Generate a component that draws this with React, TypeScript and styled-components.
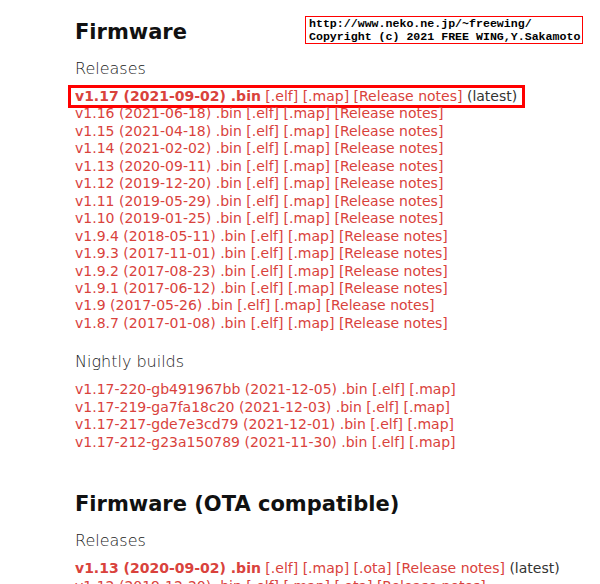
import React from 'react';
import styled, { createGlobalStyle } from 'styled-components';

const GlobalStyle = createGlobalStyle`
  html, body {
    margin: 0;
    padding: 0;
    background: #ffffff;
  }
  body {
    font-family: "DejaVu Sans", "Noto Sans", sans-serif;
    color: #222222;
  }
`;

const Page = styled.div`
  position: relative;
  width: 600px;
  height: 584px;
  overflow: hidden;
  padding: 19px 0 0 75px;
  box-sizing: border-box;
`;

const Stamp = styled.div`
  position: absolute;
  top: 16px;
  left: 305px;
  width: 278px;
  box-sizing: border-box;
  border: 1px solid #ff0000;
  background: #ffffff;
  padding: 0 0 0 3px;
  font-family: "Liberation Mono", monospace;
  font-weight: bold;
  font-size: 11.6px;
  line-height: 13px;
  color: #000000;
  white-space: pre;
`;

const Title = styled.h2<{ $gap?: number }>`
  margin: ${(p) => p.$gap ?? 0}px 0 0;
  font-family: "DejaVu Sans", sans-serif;
  font-weight: bold;
  font-size: 21px;
  line-height: 26px;
  color: #111111;
`;

const SubTitle = styled.h3<{ $gap?: number }>`
  margin: ${(p) => p.$gap ?? 13}px 0 8px;
  font-family: "DejaVu Sans", sans-serif;
  font-weight: 200;
  font-size: 16px;
  line-height: 22px;
  color: #1a1a1a;
`;

const List = styled.div`
  display: flex;
  flex-direction: column;
`;

const Row = styled.div<{ $marked?: boolean }>`
  position: relative;
  align-self: flex-start;
  font-size: 14px;
  line-height: 17.45px;
  white-space: nowrap;
  color: #333333;

  ${(p) =>
    p.$marked &&
    `
    &::after {
      content: "";
      position: absolute;
      top: -3px;
      bottom: -3px;
      left: -7px;
      right: -8px;
      border: 3px solid #ff0000;
      pointer-events: none;
    }
  `}
`;

const Link = styled.a<{ $bold?: boolean }>`
  color: #d9423c;
  text-decoration: none;
  font-weight: ${(p) => (p.$bold ? 'bold' : 'normal')};
`;

type Release = { ver: string; date: string };

const releases: Release[] = [
  { ver: 'v1.17', date: '2021-09-02' },
  { ver: 'v1.16', date: '2021-06-18' },
  { ver: 'v1.15', date: '2021-04-18' },
  { ver: 'v1.14', date: '2021-02-02' },
  { ver: 'v1.13', date: '2020-09-11' },
  { ver: 'v1.12', date: '2019-12-20' },
  { ver: 'v1.11', date: '2019-05-29' },
  { ver: 'v1.10', date: '2019-01-25' },
  { ver: 'v1.9.4', date: '2018-05-11' },
  { ver: 'v1.9.3', date: '2017-11-01' },
  { ver: 'v1.9.2', date: '2017-08-23' },
  { ver: 'v1.9.1', date: '2017-06-12' },
  { ver: 'v1.9', date: '2017-05-26' },
  { ver: 'v1.8.7', date: '2017-01-08' },
];

const nightly: Release[] = [
  { ver: 'v1.17-220-gb491967bb', date: '2021-12-05' },
  { ver: 'v1.17-219-ga7fa18c20', date: '2021-12-03' },
  { ver: 'v1.17-217-gde7e3cd79', date: '2021-12-01' },
  { ver: 'v1.17-212-g23a150789', date: '2021-11-30' },
];

const otaReleases: Release[] = [
  { ver: 'v1.13', date: '2020-09-02' },
  { ver: 'v1.12', date: '2019-12-20' },
];

function ReleaseRow({
  ver,
  date,
  latest,
  notes,
  ota,
}: {
  ver: string;
  date: string;
  latest?: boolean;
  notes?: boolean;
  ota?: boolean;
}) {
  return (
    <Row $marked={latest && !ota}>
      <Link href="#" $bold={latest}>
        {ver} ({date}) .bin
      </Link>{' '}
      <Link href="#">[.elf]</Link> <Link href="#">[.map]</Link>
      {ota && (
        <>
          {' '}
          <Link href="#">[.ota]</Link>
        </>
      )}
      {notes && (
        <>
          {' '}
          <Link href="#">[Release notes]</Link>
        </>
      )}
      {latest && ' (latest)'}
    </Row>
  );
}

export default function App() {
  return (
    <Page>
      <GlobalStyle />
      <Stamp>
        {'http://www.neko.ne.jp/~freewing/\nCopyright (c) 2021 FREE WING,Y.Sakamoto'}
      </Stamp>

      <Title>Firmware</Title>
      <SubTitle>Releases</SubTitle>
      <List>
        {releases.map((r, i) => (
          <ReleaseRow key={r.ver} ver={r.ver} date={r.date} latest={i === 0} notes />
        ))}
      </List>

      <SubTitle $gap={19}>Nightly builds</SubTitle>
      <List>
        {nightly.map((r) => (
          <ReleaseRow key={r.ver} ver={r.ver} date={r.date} />
        ))}
      </List>

      <Title $gap={40}>Firmware (OTA compatible)</Title>
      <SubTitle>Releases</SubTitle>
      <List>
        {otaReleases.map((r, i) => (
          <ReleaseRow key={r.ver} ver={r.ver} date={r.date} latest={i === 0} notes ota />
        ))}
      </List>
    </Page>
  );
}
